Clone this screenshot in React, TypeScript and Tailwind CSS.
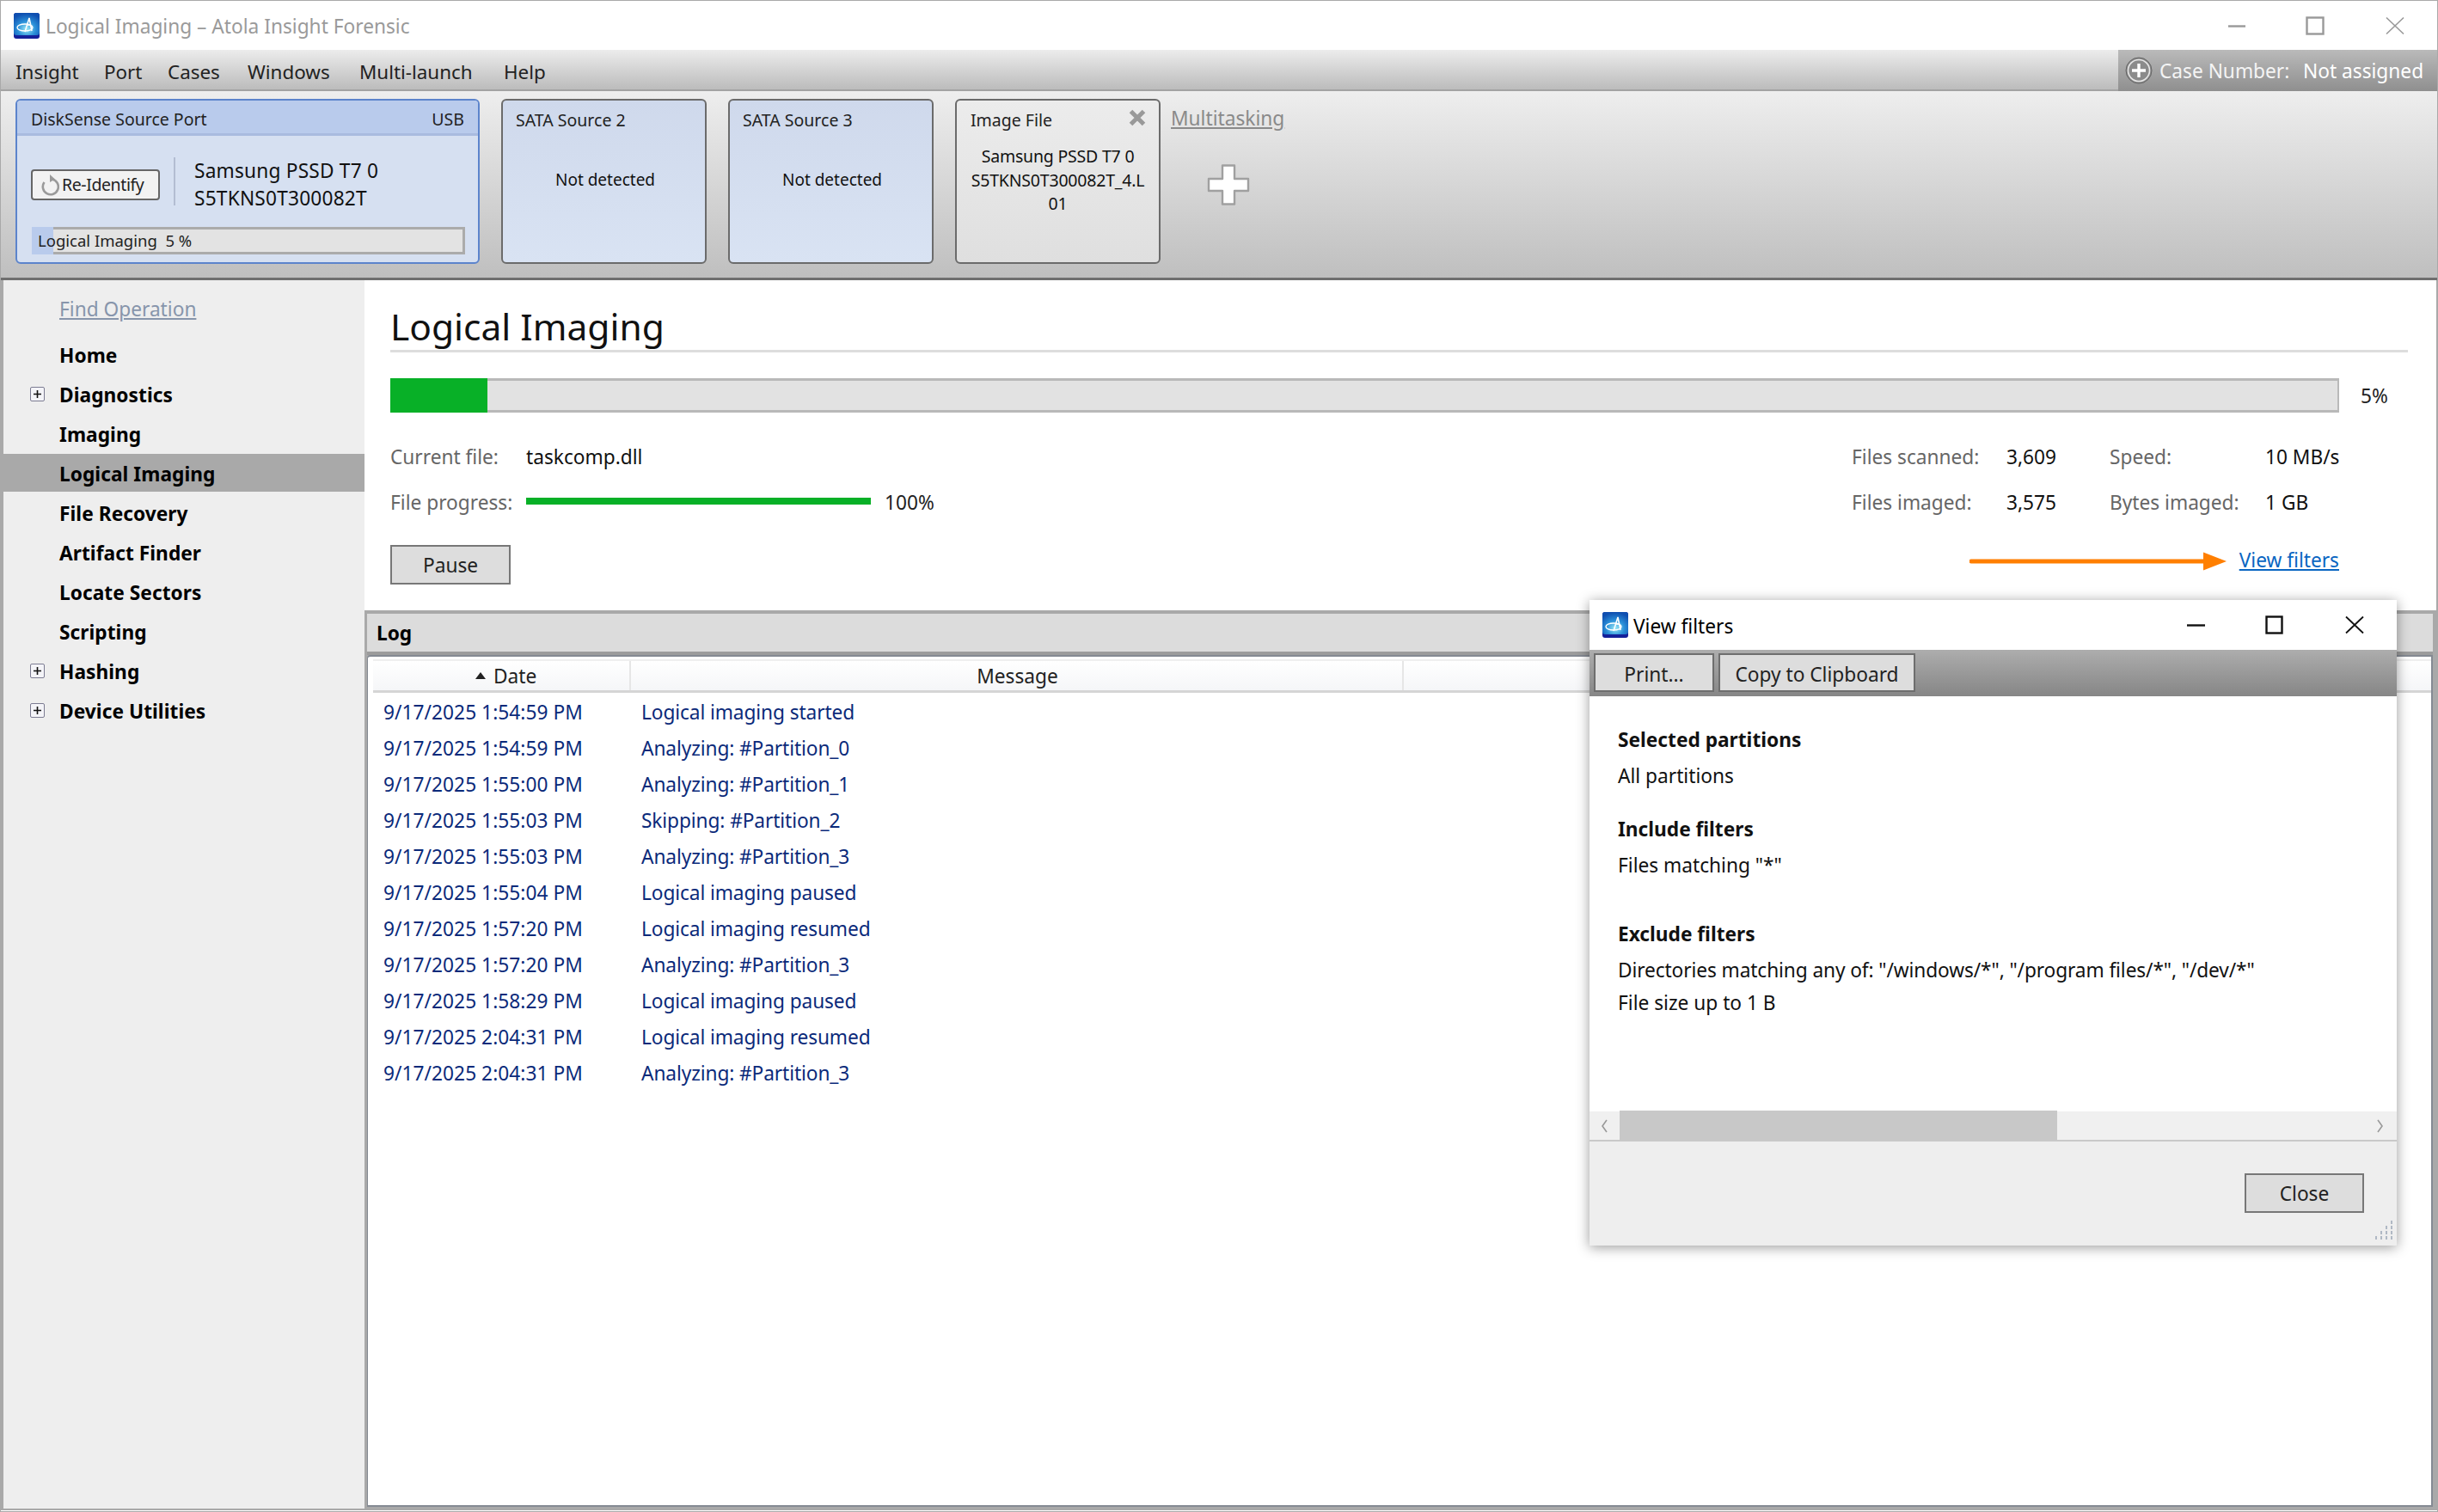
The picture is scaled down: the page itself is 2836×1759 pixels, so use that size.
import React from "react";

const logs: [string, string][] = [
  ["9/17/2025 1:54:59 PM", "Logical imaging started"],
  ["9/17/2025 1:54:59 PM", "Analyzing: #Partition_0"],
  ["9/17/2025 1:55:00 PM", "Analyzing: #Partition_1"],
  ["9/17/2025 1:55:03 PM", "Skipping: #Partition_2"],
  ["9/17/2025 1:55:03 PM", "Analyzing: #Partition_3"],
  ["9/17/2025 1:55:04 PM", "Logical imaging paused"],
  ["9/17/2025 1:57:20 PM", "Logical imaging resumed"],
  ["9/17/2025 1:57:20 PM", "Analyzing: #Partition_3"],
  ["9/17/2025 1:58:29 PM", "Logical imaging paused"],
  ["9/17/2025 2:04:31 PM", "Logical imaging resumed"],
  ["9/17/2025 2:04:31 PM", "Analyzing: #Partition_3"],
];

const nav: [string, boolean, boolean][] = [
  ["Home", false, false],
  ["Diagnostics", true, false],
  ["Imaging", false, false],
  ["Logical Imaging", false, true],
  ["File Recovery", false, false],
  ["Artifact Finder", false, false],
  ["Locate Sectors", false, false],
  ["Scripting", false, false],
  ["Hashing", true, false],
  ["Device Utilities", true, false],
];

const menu: [string, string][] = [
  ["Insight", "w-[103px]"],
  ["Port", "w-[74px]"],
  ["Cases", "w-[93px]"],
  ["Windows", "w-[130px]"],
  ["Multi-launch", "w-[168px]"],
  ["Help", "w-[60px]"],
];

function Logo({ id, w, h }: { id: string; w: number; h: number }) {
  return (
    <svg width={w} height={h} viewBox="0 0 30 30" className="shrink-0">
      <defs>
        <radialGradient id={id} cx="50%" cy="72%" r="70%">
          <stop offset="0%" stopColor="#9aeaf7" />
          <stop offset="50%" stopColor="#2a8fd8" />
          <stop offset="100%" stopColor="#0f4fb0" />
        </radialGradient>
      </defs>
      <rect x="0" y="0" width="30" height="30" rx="3" fill="#14209a" />
      <rect x="0" y="0" width="30" height="26" rx="3" fill={`url(#${id})`} />
      <ellipse cx="13" cy="17" rx="9" ry="4" fill="none" stroke="#ffffff" strokeWidth="1.4" />
      <path d="M13 22 L18 6 L21 21 M15 14 L20 14" fill="none" stroke="#ffffff" strokeWidth="1.6" />
    </svg>
  );
}

function PortCard({ title }: { title: string }) {
  return (
    <div className="w-[239px] h-[192px] border-2 border-[#6b6b6b] rounded-[6px] bg-gradient-to-b from-[#cfd9ec] to-[#d9e3f3] flex flex-col">
      <div className="pl-[15px] pt-[9px] h-[44px] text-[19.5px] leading-[28px] text-[#222]">{title}</div>
      <div className="text-center text-[19px] text-[#111] mt-[34px] pl-[3px] leading-[28px]">Not detected</div>
    </div>
  );
}

function Plus() {
  return (
    <svg width="17" height="17" viewBox="0 0 17 17" className="shrink-0">
      <rect x="0.5" y="0.5" width="16" height="16" rx="1.5" fill="#f4f4f8" stroke="#7c7c92" />
      <path d="M4 8.5 H13 M8.5 4 V13" stroke="#111" strokeWidth="1.6" />
    </svg>
  );
}

export default function App() {
  return (
    <div className="relative w-[2836px] h-[1759px] overflow-hidden bg-white [font-family:'Noto_Sans',sans-serif] text-[22.7px] text-black">
      <div className="flex flex-col h-full border border-[#a9a9a9] border-b-0">
        {/* Title bar */}
        <div className="h-[57px] flex items-center bg-white pl-[15px] shrink-0">
          <Logo id="lg1" w={30} h={30} />
          <span className="ml-[7px] mt-[3px] text-[22.7px] text-[#9a9a9a]">Logical Imaging – Atola Insight Forensic</span>
          <div className="ml-auto flex items-center">
            <svg width="206" height="24" viewBox="0 0 206 24" className="mr-[37px] text-[#999]">
              <path d="M0 12.5 H20" stroke="currentColor" strokeWidth="2.4" />
              <rect x="91.5" y="2.5" width="19" height="19" fill="none" stroke="currentColor" strokeWidth="2.4" />
              <path d="M184 2.5 L204 21.5 M204 2.5 L184 21.5" stroke="currentColor" strokeWidth="1.6" />
            </svg>
          </div>
        </div>
        {/* Menu bar */}
        <div className="h-[48px] shrink-0 flex bg-gradient-to-b from-[#ececec] to-[#bcbcbc] border-b-2 border-[#a3a3a3]">
          <div className="flex items-center pl-[17px] pt-[5px] h-full text-[22.4px]">
            {menu.map(([m, w]) => (
              <span key={m} className={`${w} text-[#222]`}>{m}</span>
            ))}
          </div>
          <div className="ml-auto w-[371px] h-[48px] bg-gradient-to-b from-[#bababa] to-[#8f8f8f] flex items-center pl-[8px] text-white">
            <svg width="32" height="32" viewBox="0 0 32 32" className="shrink-0">
              <circle cx="16" cy="16" r="15" fill="#8b8b8b" stroke="#666" strokeWidth="1" />
              <circle cx="16" cy="16" r="12.5" fill="none" stroke="#e6e6e6" strokeWidth="1.6" />
              <path d="M16 8 V24 M8 16 H24" stroke="#fff" strokeWidth="3.4" />
            </svg>
            <span className="ml-[8px] mt-[3px] w-[167px] text-[#f4f4f4]">Case Number:</span>
            <span className="mt-[3px] text-white">Not assigned</span>
          </div>
        </div>
        {/* Ports */}
        <div className="h-[220px] shrink-0 flex items-start pt-[9px] pl-[17px] bg-gradient-to-b from-[#eeeeee] to-[#bfbfbf] border-b-[3px] border-[#6f6f6f]">
          <div className="w-[540px] h-[192px] border-2 border-[#5c84cc] rounded-[6px] bg-[#d6e0f1] flex flex-col overflow-hidden">
            <div className="h-[41px] pt-[5px] shrink-0 flex items-center justify-between px-[16px] bg-[#b9cbec] border-b-[3px] border-[#a9bbdf] text-[19.5px] text-[#222]">
              <span>DiskSense Source Port</span>
              <span>USB</span>
            </div>
            <div className="h-[81px] mt-[16px] shrink-0 flex items-center pl-[16px]">
              <div className="w-[150px] h-[36px] border-2 border-[#666] rounded-[4px] bg-[#f2f2f2] flex items-center pl-[9px] text-[19.5px] text-[#222]">
                <svg width="22" height="26" viewBox="0 0 22 26" className="shrink-0">
                  <path d="M14 6.5 A9 9 0 1 1 4.5 10" fill="none" stroke="#9a9a9a" strokeWidth="2.6" />
                  <path d="M11 1 L17 6.5 L11 10 Z" fill="#9a9a9a" />
                </svg>
                <span className="ml-[3px] tracking-[-0.4px]">Re-Identify</span>
              </div>
              <div className="ml-[16px] w-[2px] h-[56px] -mt-[8px] bg-[#b3bdd2]" />
              <div className="ml-[22px] leading-[32px] text-[#111] tracking-[0.2px]">
                <div>Samsung PSSD T7 0</div>
                <div>S5TKNS0T300082T</div>
              </div>
            </div>
            <div className="mt-[9px] ml-[17px] mr-[15px] h-[32px] border-[3px] border-[#ababab] bg-[#e3e3e3] relative flex items-center text-[18.5px] text-[#222]">
              <div className="absolute left-[-3px] top-[-3px] bottom-[-3px] w-[25px] bg-[#b9cbec]" />
              <span className="relative ml-[4px] whitespace-pre">Logical Imaging  5 %</span>
            </div>
          </div>
          <div className="ml-[25px]">
            <PortCard title="SATA Source 2" />
          </div>
          <div className="ml-[25px]">
            <PortCard title="SATA Source 3" />
          </div>
          <div className="ml-[25px] w-[239px] h-[192px] border-2 border-[#6b6b6b] rounded-[6px] bg-gradient-to-b from-[#ececec] to-[#dfdfdf] flex flex-col">
            <div className="flex justify-between pl-[16px] pr-[15px] pt-[9px] h-[44px] text-[19.5px] leading-[28px] text-[#222]">
              <span>Image File</span>
              <svg width="20" height="20" viewBox="0 0 20 20" className="mt-[1px]">
                <path d="M2.5 2.5 L17.5 17.5 M17.5 2.5 L2.5 17.5" stroke="#999" strokeWidth="5" />
              </svg>
            </div>
            <div className="text-center text-[19.5px] leading-[27.5px] text-[#111] mt-[7px] tracking-[-0.2px]">
              <div>Samsung PSSD T7 0</div>
              <div>S5TKNS0T300082T_4.L</div>
              <div>01</div>
            </div>
          </div>
          <div className="ml-[12px] flex flex-col">
            <span className="mt-[6px] text-[#8a8a8a] underline underline-offset-2">Multitasking</span>
            <svg width="50" height="48" viewBox="0 0 50 48" className="ml-[42px] mt-[36px]">
              <path d="M18 1.5 H32 V17 H48 V31 H32 V46.5 H18 V31 H2 V17 H18 Z" fill="#fff" stroke="#a0a0a0" strokeWidth="2.4" strokeLinejoin="round" />
            </svg>
          </div>
        </div>
        {/* Body */}
        <div className="flex-1 flex min-h-0 bg-[#a9a9a9] pb-[2px]">
          {/* Sidebar */}
          <div className="w-[423px] shrink-0 bg-[#eeeeee] border-l-[3px] border-[#a9a9a9] pt-[17px] h-[1429px]">
            <div className="pl-[65px] h-[47px] text-[#8795ab] underline underline-offset-2">Find Operation</div>
            <div>
              {nav.map(([label, plus, sel]) => (
                <div key={label} className="h-[46px]">
                  <div className={`h-[44px] pt-[4px] flex items-center ${sel ? "bg-[#a9a9a9]" : ""}`}>
                    <div className="w-[65px] pl-[31px] shrink-0 -mt-[4px]">{plus ? <Plus /> : null}</div>
                    <span className="font-bold tracking-[0.05px]">{label}</span>
                  </div>
                </div>
              ))}
            </div>
          </div>
          {/* Main */}
          <div className="flex-1 min-w-0 flex flex-col bg-white">
            <div className="h-[384px] shrink-0 pl-[30px] border-r border-[#a9a9a9]">
              <div className="mr-[33px] h-[84px] border-b-[3px] border-[#dddddd] pt-[26px] text-[42.5px] leading-[56px] text-[#111]">Logical Imaging</div>
              <div className="mt-[30px] flex items-center">
                <div className="w-[2267px] h-[40px] bg-[#e2e2e2] border-y-[3px] border-[#b9b9b9] border-r-2 relative">
                  <div className="absolute left-0 top-[-3px] bottom-[-3px] w-[113px] bg-[#08b027]" />
                </div>
                <span className="ml-[25px] mt-[2px] text-[#222]">5%</span>
              </div>
              <div className="mt-[26px] pr-[112px] flex justify-between">
                <div className="grid grid-cols-[158px_1fr] auto-rows-[53px] items-center">
                  <span className="text-[#666]">Current file:</span>
                  <span className="text-[#111]">taskcomp.dll</span>
                  <span className="text-[#666]">File progress:</span>
                  <div className="flex items-center">
                    <div className="w-[401px] h-[8px] bg-[#08b027] -mt-[4px]" />
                    <span className="ml-[16px] text-[#222]">100%</span>
                  </div>
                </div>
                <div className="grid grid-cols-[180px_120px_181px_87px] auto-rows-[53px] items-center">
                  <span className="text-[#666]">Files scanned:</span>
                  <span className="text-[#111]">3,609</span>
                  <span className="text-[#666]">Speed:</span>
                  <span className="text-[#111]">10 MB/s</span>
                  <span className="text-[#666]">Files imaged:</span>
                  <span className="text-[#111]">3,575</span>
                  <span className="text-[#666]">Bytes imaged:</span>
                  <span className="text-[#111]">1 GB</span>
                </div>
              </div>
              <div className="mt-[22px] pr-[113px] flex justify-between items-start">
                <div className="w-[140px] h-[46px] pt-[2px] border-2 border-[#777] bg-[#dddddd] flex items-center justify-center text-[#222]">Pause</div>
                <div className="flex items-center mt-[1px]">
                  <svg width="300" height="22" viewBox="0 0 300 22" className="mt-[2px]">
                    <path d="M2 11 H272" stroke="#ff7f00" strokeWidth="5" strokeLinecap="round" />
                    <path d="M272 0.5 L299 11 L272 21.5 Z" fill="#ff7f00" />
                  </svg>
                  <span className="ml-[14px] text-[#0a66c2] underline underline-offset-2">View filters</span>
                </div>
              </div>
            </div>
            {/* Log */}
            <div className="flex-1 min-h-0 flex flex-col bg-[#a9a9a9] pl-[3px] pt-[4px] pr-[5px]">
              <div className="h-[44px] shrink-0 bg-[#dcdcdc] flex items-center pl-[11px] pt-[3px] font-bold">Log</div>
              <div className="h-[4px] shrink-0 bg-[#9c9c9c]" />
              <div className="h-[991px] shrink-0 bg-white rounded-tl-[4px] border-t-2 border-l border-r-2 border-b-2 border-[#858a93] pt-[3px] pl-[6px]">
                <div className="flex h-[39px] border-t-2 border-[#efefef] border-b-[3px] border-b-[#d5d5d5] bg-gradient-to-b from-white to-[#f5f6f8]">
                  <div className="w-[300px] flex items-center border-r-2 border-[#e6e6e6] pl-[119px]">
                    <svg width="12" height="8" viewBox="0 0 12 8" className="shrink-0">
                      <path d="M6 0 L12 8 H0 Z" fill="#222" />
                    </svg>
                    <span className="ml-[9px] pt-[2px] text-[#222]">Date</span>
                  </div>
                  <div className="w-[899px] flex items-center justify-center border-r-2 border-[#e6e6e6] pt-[2px] pl-[2px] text-[#222]">Message</div>
                </div>
                <div className="mt-[2px]">
                  {logs.map(([d, m], i) => (
                    <div key={i} className="h-[42px] flex items-center text-[#0b2a7a]">
                      <span className="w-[312px] pl-[12px] shrink-0 tracking-[0.05px]">{d}</span>
                      <span className="tracking-[-0.1px]">{m}</span>
                    </div>
                  ))}
                </div>
              </div>
            </div>
          </div>
        </div>
        <div className="h-[1px] shrink-0 bg-white" />
        <div className="h-[1px] shrink-0 bg-[#a9a9a9]" />
      </div>

      {/* View filters window */}
      <div className="absolute left-[1849px] top-[698px] w-[939px] h-[751px] bg-white shadow-[0_2px_14px_rgba(0,0,0,0.4)] flex flex-col">
        <div className="h-[58px] shrink-0 flex items-center pl-[15px]">
          <Logo id="lg2" w={30} h={30} />
          <span className="ml-[6px] pt-[5px]">View filters</span>
          <svg width="206" height="24" viewBox="0 0 206 24" className="ml-auto mr-[38px]">
            <path d="M0 12.5 H21" stroke="#111" strokeWidth="2.4" />
            <rect x="92.5" y="2.5" width="18" height="19" fill="none" stroke="#111" strokeWidth="2.4" />
            <path d="M185 2.5 L205 21.5 M205 2.5 L185 21.5" stroke="#111" strokeWidth="1.8" />
          </svg>
        </div>
        <div className="h-[54px] shrink-0 bg-gradient-to-b from-[#adadad] to-[#868686] flex items-start pt-[4px] pl-[5px] gap-[5px]">
          <div className="w-[140px] h-[45px] pt-[5px] border-2 border-[#6e6e6e] bg-[#dddddd] flex items-center justify-center text-[#222]">Print...</div>
          <div className="w-[229px] h-[45px] pt-[5px] border-2 border-[#6e6e6e] bg-[#dddddd] flex items-center justify-center text-[#222]">Copy to Clipboard</div>
        </div>
        <div className="flex-1 min-h-0 pl-[33px] pt-[35px] text-[#111]">
          <div className="h-[32px] leading-[32px] font-bold">Selected partitions</div>
          <div className="mt-[10px] h-[32px] leading-[32px]">All partitions</div>
          <div className="mt-[30px] h-[32px] leading-[32px] font-bold">Include filters</div>
          <div className="mt-[10px] h-[32px] leading-[32px]">Files matching "*"</div>
          <div className="mt-[48px] h-[32px] leading-[32px] font-bold">Exclude filters</div>
          <div className="mt-[10px] h-[32px] leading-[32px] tracking-[-0.1px]">Directories matching any of: "/windows/*", "/program files/*", "/dev/*"</div>
          <div className="mt-[6px] h-[32px] leading-[32px]">File size up to 1 B</div>
        </div>
        <div className="h-[35px] shrink-0 bg-[#f0f0f0] border-b-2 border-[#c9c9c9] flex items-center">
          <svg width="35" height="16" viewBox="0 0 35 16" className="shrink-0">
            <path d="M20 1 L15 8 L20 15" fill="none" stroke="#999" strokeWidth="1.6" />
          </svg>
          <div className="w-[509px] h-[35px] bg-[#c8c8c8] shrink-0" />
          <svg width="20" height="16" viewBox="0 0 20 16" className="ml-auto mr-[8px]">
            <path d="M6 1 L11 8 L6 15" fill="none" stroke="#999" strokeWidth="1.6" />
          </svg>
        </div>
        <div className="h-[121px] shrink-0 bg-[#eeeeee] relative flex justify-end pt-[37px] pr-[38px]">
          <div className="w-[139px] h-[46px] pt-[3px] border-2 border-[#777] bg-[#dddddd] flex items-center justify-center text-[#222]">Close</div>
          <svg width="24" height="24" viewBox="0 0 24 24" className="absolute right-[3px] bottom-[5px]" fill="#b0b8c4">
            {[[20, 0], [20, 6], [14, 6], [20, 12], [14, 12], [8, 12], [20, 18], [14, 18], [8, 18], [2, 18]].map(([x, y], i) => (
              <rect key={i} x={x} y={y} width="2" height="4" />
            ))}
          </svg>
        </div>
      </div>
    </div>
  );
}
